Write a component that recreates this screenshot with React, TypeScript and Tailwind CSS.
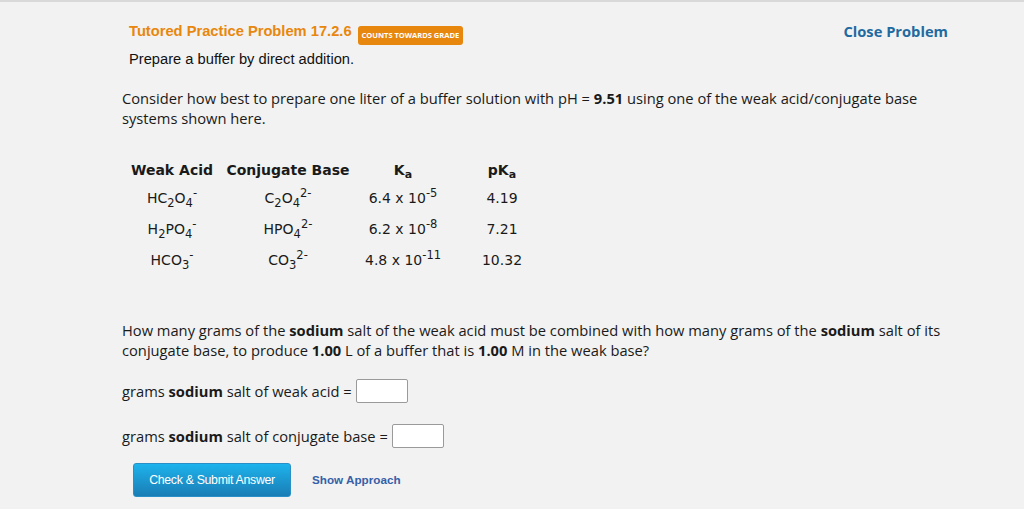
const openSans = "font-['Open_Sans',sans-serif]";
const arial = "font-['Liberation_Sans',Arial,sans-serif]";
const verdana = "font-['DejaVu_Sans',Verdana,sans-serif]";

type Row = { acid: React.ReactNode; base: React.ReactNode; ka: React.ReactNode; pka: string };

const sub = (s: string) => <span className="relative top-[4px] text-[11.5px]">{s}</span>;
const sup = (s: string) => <span className="relative top-[-6px] text-[11.5px]">{s}</span>;

const rows: Row[] = [
  {
    acid: <>HC{sub("2")}O{sub("4")}{sup("-")}</>,
    base: <>C{sub("2")}O{sub("4")}{sup("2-")}</>,
    ka: <>6.4 x 10{sup("-5")}</>,
    pka: "4.19",
  },
  {
    acid: <>H{sub("2")}PO{sub("4")}{sup("-")}</>,
    base: <>HPO{sub("4")}{sup("2-")}</>,
    ka: <>6.2 x 10{sup("-8")}</>,
    pka: "7.21",
  },
  {
    acid: <>HCO{sub("3")}{sup("-")}</>,
    base: <>CO{sub("3")}{sup("2-")}</>,
    ka: <>4.8 x 10{sup("-11")}</>,
    pka: "10.32",
  },
];

function AnswerLine({ label }: { label: string }) {
  return (
    <div className={`flex h-[24px] items-center ${openSans} text-[14.7px] text-[#1a1a1a]`}>
      <span>
        grams <b>sodium</b> {label} =
      </span>
      <input className="ml-[4px] h-[24px] w-[52px] rounded-[2px] border border-[#9a9a9a] bg-white" />
    </div>
  );
}

export default function App() {
  return (
    <div className="min-h-screen w-full border-t-2 border-[#d9d9d9] bg-[#f2f2f2]">
      <div className="pl-[122px] pr-[76px] pt-[19px]">
        <div className="flex items-start justify-between pl-[7px]">
          <div className="flex items-start gap-[6px]">
            <h2 className={`${arial} text-[14.7px] font-bold leading-[20px] text-[#e8870e]`}>
              Tutored Practice Problem 17.2.6
            </h2>
            <span
              className={`${openSans} mt-[5px] flex h-[19px] items-center rounded-[3px] bg-[#e8870e] px-[4px] text-[7.5px] font-bold leading-none text-white`}
            >
              COUNTS TOWARDS GRADE
            </span>
          </div>
          <a className={`${openSans} text-[14.7px] font-bold leading-[21px] text-[#1f6aa0]`}>Close Problem</a>
        </div>
        <p className={`${arial} mt-[4px] pl-[7px] text-[14.7px] leading-[20px] text-[#111]`}>
          Prepare a buffer by direct addition.
        </p>

        <p className={`${openSans} mt-[19px] text-[14.7px] leading-[20px] text-[#1a1a1a]`}>
          Consider how best to prepare one liter of a buffer solution with pH = <b>9.51</b> using one of the
          weak acid/conjugate base
          <br />
          systems shown here.
        </p>

        <table className={`${verdana} mt-[29px] ml-[4px] border-collapse text-[14px] text-[#1a1a1a]`}>
          <thead>
            <tr className="h-[26px]">
              <th className="w-[92px] p-0 text-center font-bold">Weak Acid</th>
              <th className="w-[140px] p-0 text-center font-bold">Conjugate Base</th>
              <th className="w-[90px] p-0 text-center font-bold">
                K<span className="relative top-[3px] text-[11px]">a</span>
              </th>
              <th className="w-[108px] p-0 text-center font-bold">
                pK<span className="relative top-[3px] text-[11px]">a</span>
              </th>
            </tr>
          </thead>
          <tbody>
            {rows.map((r, i) => (
              <tr key={i} className="h-[31px]">
                <td className="p-0 text-center">{r.acid}</td>
                <td className="p-0 text-center">{r.base}</td>
                <td className="p-0 text-center">{r.ka}</td>
                <td className="p-0 text-center">{r.pka}</td>
              </tr>
            ))}
          </tbody>
        </table>

        <p className={`${openSans} mt-[44px] text-[14.7px] leading-[20px] text-[#1a1a1a]`}>
          How many grams of the <b>sodium</b> salt of the weak acid must be combined with how many grams of the{" "}
          <b>sodium</b> salt of its
          <br />
          conjugate base, to produce <b>1.00</b> L of a buffer that is <b>1.00</b> M in the weak base?
        </p>

        <div className="mt-[19px] flex flex-col gap-[21px]">
          <AnswerLine label="salt of weak acid" />
          <AnswerLine label="salt of conjugate base" />
        </div>

        <div className="mt-[15px] flex items-center gap-[21px] pl-[11px]">
          <button
            className={`${arial} h-[34px] w-[158px] rounded-[3px] border border-[#2a8fc4] bg-gradient-to-b from-[#1db3ec] to-[#1a7db5] text-[12.3px] tracking-[-0.3px] text-white`}
          >
            Check &amp; Submit Answer
          </button>
          <a className={`${arial} text-[11.7px] font-bold text-[#3660a8]`}>Show Approach</a>
        </div>
      </div>
    </div>
  );
}
